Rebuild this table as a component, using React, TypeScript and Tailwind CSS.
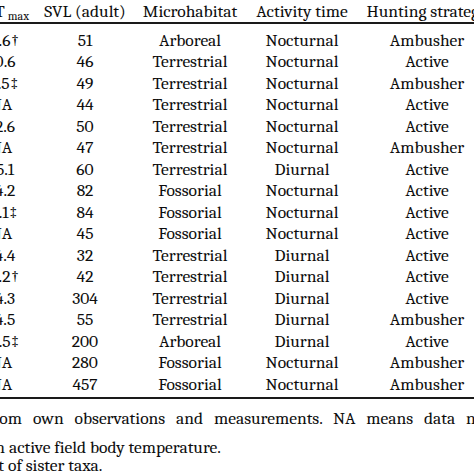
const rows: [string, string, string, string, string][] = [
  ['33.6†', '51', 'Arboreal', 'Nocturnal', 'Ambusher'],
  ['30.6', '46', 'Terrestrial', 'Nocturnal', 'Active'],
  ['31.5‡', '49', 'Terrestrial', 'Nocturnal', 'Ambusher'],
  ['NA', '44', 'Terrestrial', 'Nocturnal', 'Active'],
  ['32.6', '50', 'Terrestrial', 'Nocturnal', 'Active'],
  ['NA', '47', 'Terrestrial', 'Nocturnal', 'Ambusher'],
  ['35.1', '60', 'Terrestrial', 'Diurnal', 'Active'],
  ['34.2', '82', 'Fossorial', 'Nocturnal', 'Active'],
  ['31.1‡', '84', 'Fossorial', 'Nocturnal', 'Active'],
  ['NA', '45', 'Fossorial', 'Nocturnal', 'Active'],
  ['34.4', '32', 'Terrestrial', 'Diurnal', 'Active'],
  ['33.2†', '42', 'Terrestrial', 'Diurnal', 'Active'],
  ['34.3', '304', 'Terrestrial', 'Diurnal', 'Active'],
  ['34.5', '55', 'Terrestrial', 'Diurnal', 'Ambusher'],
  ['32.5‡', '200', 'Arboreal', 'Diurnal', 'Active'],
  ['NA', '280', 'Fossorial', 'Nocturnal', 'Ambusher'],
  ['NA', '457', 'Fossorial', 'Nocturnal', 'Ambusher'],
];

const grid = 'grid w-[544px] -ml-[39px] grid-cols-[80px_88px_122px_102px_148px] text-center';

export default function App() {
  return (
    <div className="h-[474px] w-[474px] overflow-hidden bg-white font-serif text-[17.5px] text-[#0d0d0d]">
      <div className={`${grid} h-[22px] items-center leading-[22px]`}>
        <div className="whitespace-nowrap pl-[22px]">
          T<sub className="ml-[3px] text-[12px]">max</sub>
        </div>
        <div className="whitespace-nowrap">SVL (adult)</div>
        <div className="whitespace-nowrap">Microhabitat</div>
        <div className="whitespace-nowrap">Activity time</div>
        <div className="whitespace-nowrap">Hunting strategy</div>
      </div>
      <div className="h-[1.5px] bg-[#1a1a1a]" />

      <div className="pt-[6px] pb-[2px]">
        {rows.map((r, i) => (
          <div key={i} className={`${grid} h-[21.5px] leading-[21.5px]`}>
            {r.map((c, j) => (
              <div key={j} className="whitespace-nowrap">
                {c}
              </div>
            ))}
          </div>
        ))}
      </div>
      <div className="h-[2px] bg-[#1a1a1a]" />

      <div className="mt-[9px] flex h-[20px] items-center whitespace-nowrap">
        <span className="-ml-[178px] w-[200px] shrink-0 text-right">Data were taken from</span>
        <span className="ml-[11px] [word-spacing:7px]">
          own observations and measurements. NA means data not available.
        </span>
      </div>
      <div className="mt-[10px] flex h-[18px] items-center whitespace-nowrap">
        <span className="-ml-[195px] w-[200px] shrink-0 text-right">† Maximum</span>
        <span className="ml-[4px]">active field body temperature.</span>
      </div>
      <div className="flex h-[18px] items-center whitespace-nowrap">
        <span className="-ml-[196px] w-[200px] shrink-0 text-right">‡ Measurement</span>
        <span className="ml-[4px]">of sister taxa.</span>
      </div>
    </div>
  );
}
